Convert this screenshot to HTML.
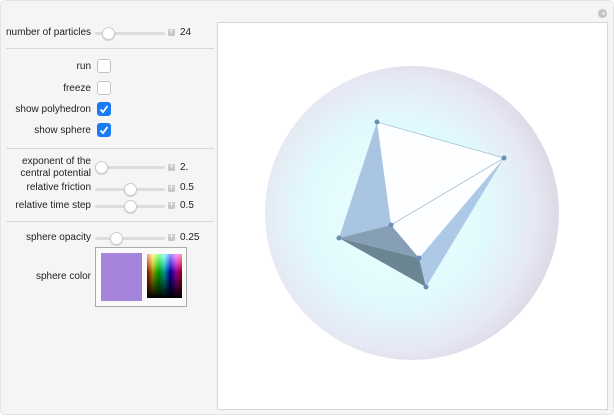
<!DOCTYPE html>
<html><head><style>
body{margin:0;width:614px;height:416px;background:#fff;font-family:"Liberation Sans",sans-serif;font-size:10px;color:#222;position:relative;overflow:hidden}
.outer{position:absolute;left:0;top:0;width:612px;height:413px;background:#f5f5f5;border:1px solid #e4e4e4;border-radius:5px}
.a{position:absolute}
.lbl{position:absolute;text-align:right;right:523px;white-space:nowrap;line-height:12px}
.track{position:absolute;left:95px;width:70px;height:3px;background:#dcdcdc;border-radius:2px}
.knob{position:absolute;width:11px;height:11px;border-radius:50%;background:#fff;border:1px solid #ccc;box-shadow:0 1px 1px rgba(0,0,0,.15);top:-5px}
.plus{position:absolute;left:168px;width:7px;height:7px;background:#c8c8c8;border-radius:1px}
.plus:after{content:"+";position:absolute;left:0;top:-3px;width:7px;text-align:center;color:#fff;font-size:9px}
.val{position:absolute;left:180px}
.hr{position:absolute;left:6px;width:208px;height:1px;background:#d8d8d8}
.cb{position:absolute;left:97px;width:12px;height:12px;border:1px solid #c4c4c4;border-radius:3px;background:#fff}
.cb.on{background:#1a7cf5;border-color:#1a7cf5}
</style></head><body>
<div class="outer"></div>
<div class="a" style="left:598px;top:9px;width:9px;height:9px;border-radius:50%;background:#c4c4c4"></div>
<div class="a" style="left:601px;top:11px;color:#fff;font-size:8px;line-height:5px">+</div>

<div class="lbl" style="top:27px;left:6px;right:auto">number of particles</div>
<div class="track" style="top:32px"><div class="knob" style="left:7px"></div></div>
<div class="plus" style="top:29px"></div><div class="val" style="top:27px">24</div>
<div class="hr" style="top:48px"></div>

<div class="lbl" style="top:61px;width:91px;left:0">run</div><div class="cb" style="top:59px"></div>
<div class="lbl" style="top:83px;width:91px;left:0">freeze</div><div class="cb" style="top:81px"></div>
<div class="lbl" style="top:104px;width:91px;left:0">show polyhedron</div><div class="cb on" style="top:102px"><svg width="12" height="12"><path d="M2.5 6.5 L5 9 L9.5 3" stroke="#fff" stroke-width="1.8" fill="none"/></svg></div>
<div class="lbl" style="top:125px;width:91px;left:0">show sphere</div><div class="cb on" style="top:123px"><svg width="12" height="12"><path d="M2.5 6.5 L5 9 L9.5 3" stroke="#fff" stroke-width="1.8" fill="none"/></svg></div>
<div class="hr" style="top:148px"></div>

<div class="lbl" style="top:156px;width:91px;left:0">exponent of the<br>central potential</div>
<div class="track" style="top:166px"><div class="knob" style="left:0px"></div></div>
<div class="plus" style="top:164px"></div><div class="val" style="top:162px">2.</div>
<div class="lbl" style="top:182px;width:91px;left:0">relative friction</div>
<div class="track" style="top:188px"><div class="knob" style="left:29px"></div></div>
<div class="plus" style="top:185px"></div><div class="val" style="top:182px">0.5</div>
<div class="lbl" style="top:200px;width:91px;left:0">relative time step</div>
<div class="track" style="top:205px"><div class="knob" style="left:29px"></div></div>
<div class="plus" style="top:202px"></div><div class="val" style="top:200px">0.5</div>
<div class="hr" style="top:221px"></div>

<div class="lbl" style="top:232px;width:91px;left:0">sphere opacity</div>
<div class="track" style="top:237px"><div class="knob" style="left:15px"></div></div>
<div class="plus" style="top:234px"></div><div class="val" style="top:232px">0.25</div>
<div class="lbl" style="top:271px;width:91px;left:0">sphere color</div>
<div class="a" style="left:95px;top:247px;width:90px;height:58px;border:1px solid #aaa;background:#fafafa"></div>
<div class="a" style="left:101px;top:253px;width:41px;height:48px;background:#a585db"></div>
<div class="a" style="left:147px;top:254px;width:35px;height:44px;background:linear-gradient(to bottom,rgba(0,0,0,0),#000),linear-gradient(to right,#f00,#ff0,#0f0,#0ff,#00f,#f0f,#f00)"></div>
<div class="a" style="left:147px;top:254px;width:35px;height:44px;background:linear-gradient(to bottom,rgba(255,255,255,.6),rgba(255,255,255,0) 40%)"></div>

<div class="a" style="left:217px;top:22px;width:389px;height:386px;background:#fff;border:1px solid #d6d6d6"></div>
<svg class="a" style="left:0;top:0" width="614" height="416">
<defs>
<radialGradient id="g" cx="0.45" cy="0.5" r="0.55">
<stop offset="0" stop-color="#eefeff"/><stop offset="0.55" stop-color="#e0fbfd"/><stop offset="0.85" stop-color="#e6e8f3"/><stop offset="1" stop-color="#ddd9e6"/>
</radialGradient>
</defs>
<circle cx="412" cy="213" r="147" fill="url(#g)"/>
<polygon points="377,122 504,158 419,258 391,225" fill="#fdfeff"/>
<polygon points="377,122 339,238 391,225" fill="#a9c5e2"/>
<polygon points="339,238 391,225 419,258" fill="#879fb4"/>
<polygon points="339,238 419,258 426,287" fill="#6c8593"/>
<polygon points="419,258 426,287 504,158" fill="#aec9e6"/>
<line x1="377" y1="122" x2="504" y2="158" stroke="#a9bfd5" stroke-width="0.8"/>
<line x1="391" y1="225" x2="504" y2="158" stroke="#a9bfd5" stroke-width="0.8"/>
<g fill="#6a8fb5"><circle cx="377" cy="122" r="2.5"/><circle cx="504" cy="158" r="2.5"/><circle cx="339" cy="238" r="2.5"/><circle cx="391" cy="225" r="2.5"/><circle cx="419" cy="258" r="2.5"/><circle cx="426" cy="287" r="2.5"/></g>
</svg>
</body></html>
